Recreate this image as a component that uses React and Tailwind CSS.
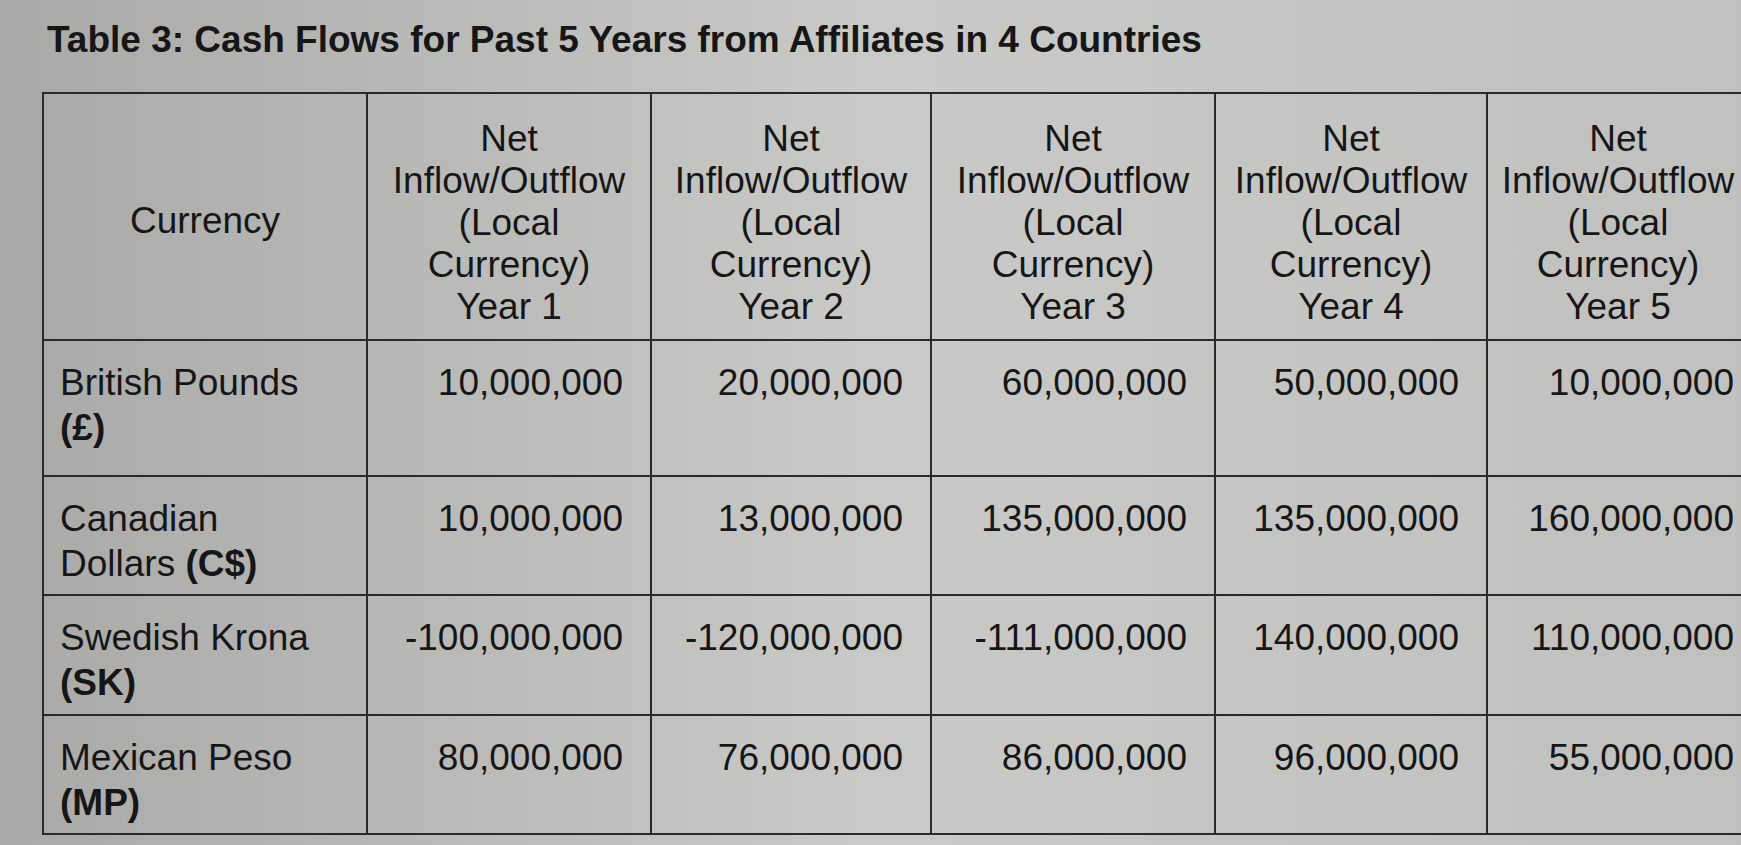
const rows = [
  { name: "British Pounds", code: "(£)", split: true, values: ["10,000,000", "20,000,000", "60,000,000", "50,000,000", "10,000,000"] },
  { name: "Canadian", rest: "Dollars", code: "(C$)", values: ["10,000,000", "13,000,000", "135,000,000", "135,000,000", "160,000,000"] },
  { name: "Swedish Krona", code: "(SK)", split: true, values: ["-100,000,000", "-120,000,000", "-111,000,000", "140,000,000", "110,000,000"] },
  { name: "Mexican Peso", code: "(MP)", split: true, values: ["80,000,000", "76,000,000", "86,000,000", "96,000,000", "55,000,000"] },
];

const heights = ["h-[136px]", "h-[119px]", "h-[120px]", "h-[119px]"];
const colWidths = ["w-[284px]", "w-[280px]", "w-[284px]", "w-[272px]", "w-[262px]"];
const years = [1, 2, 3, 4, 5];

export default function App() {
  return (
    <div className="w-[1741px] h-[845px] overflow-hidden bg-gradient-to-r from-[#a9aaa8] via-[#c9cac8] to-[#c0c1bf] text-[#161616] font-['Liberation_Sans',Arial,sans-serif]">
      <h1 className="pl-[47px] pt-[16px] h-[92px] text-[37px] leading-[48px] font-bold">
        Table 3: Cash Flows for Past 5 Years from Affiliates in 4 Countries
      </h1>
      <table className="ml-[42px] w-[1706px] table-fixed border-collapse text-[37px] leading-[42px]">
        <colgroup>
          <col className="w-[324px]" />
          {colWidths.map((w, i) => (
            <col key={i} className={w} />
          ))}
        </colgroup>
        <thead>
          <tr className="h-[247px]">
            <th className="border-2 border-[#2a2a2a] font-normal text-center align-middle pt-[8px]">Currency</th>
            {years.map((y) => (
              <th key={y} className="border-2 border-[#2a2a2a] font-normal text-center align-middle pt-[12px] whitespace-nowrap">
                Net
                <br />
                Inflow/Outflow
                <br />
                (Local
                <br />
                Currency)
                <br />
                Year {y}
              </th>
            ))}
          </tr>
        </thead>
        <tbody>
          {rows.map((r, i) => (
            <tr key={r.name} className={heights[i]}>
              <td className="border-2 border-[#2a2a2a] align-top pl-[16px] pt-[19px] leading-[45px]">
                {r.split ? (
                  <>
                    {r.name}
                    <br />
                    <span className="font-bold">{r.code}</span>
                  </>
                ) : (
                  <>
                    {r.name}
                    <br />
                    {r.rest} <span className="font-bold">{r.code}</span>
                  </>
                )}
              </td>
              {r.values.map((v, j) => (
                <td
                  key={j}
                  className={`border-2 border-[#2a2a2a] align-top text-right pt-[19px] leading-[45px] whitespace-nowrap ${j === 4 ? "pr-[14px]" : "pr-[27px]"}`}
                >
                  {v}
                </td>
              ))}
            </tr>
          ))}
        </tbody>
      </table>
    </div>
  );
}
